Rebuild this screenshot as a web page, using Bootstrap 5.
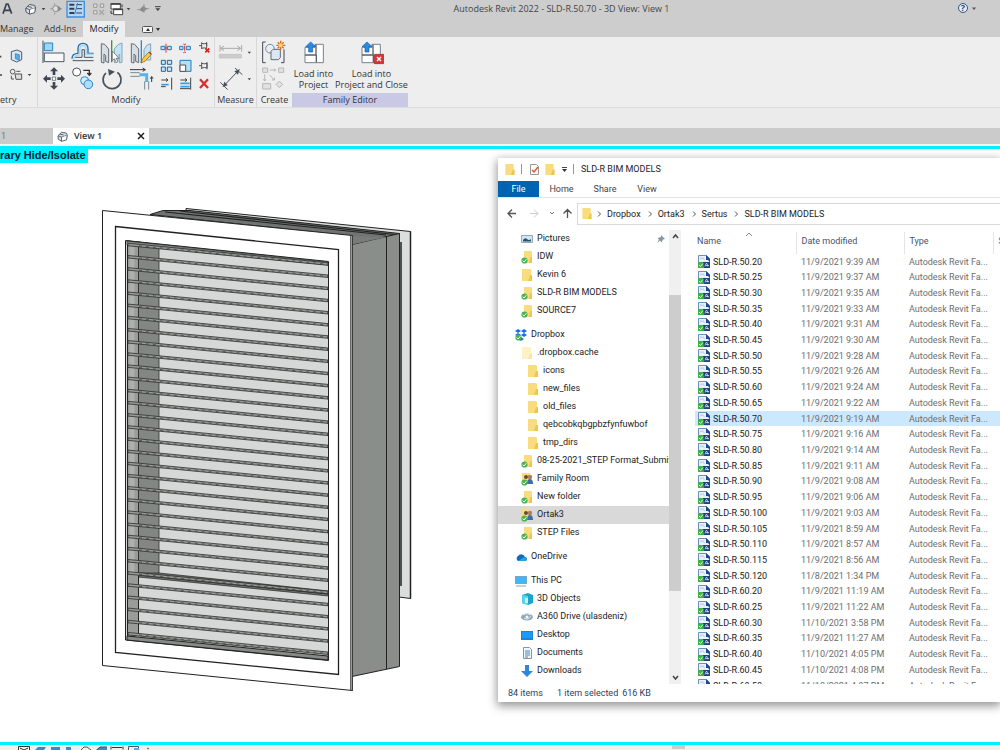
<!DOCTYPE html>
<html lang="en">
<head>
<meta charset="utf-8">
<meta name="viewport" content="width=device-width, initial-scale=1">
<title>Autodesk Revit 2022 - SLD-R.50.70 - 3D View: View 1</title>
<link href="https://cdn.jsdelivr.net/npm/bootstrap@5.3.0/dist/css/bootstrap.min.css" rel="stylesheet">
<style>
body{font-family:Roboto,"Open Sans",sans-serif;font-size:9px;line-height:12px;color:#333;background:#fff}
svg{display:block;flex:none}
button{border:0;background:none;padding:0;color:inherit;font:inherit}
a{color:inherit;text-decoration:none}
.titlebar{height:18px;background:#cdcdcd}
.tabbar{height:19px;background:#cdcdcd}
.tabbar a{height:16px;line-height:15px}
.titlebar,.tabbar,.ribbon{font-family:"Open Sans",sans-serif}
.tab-manage{width:37px}
.tab-addins{width:46px;text-align:center}
.tab-modify{width:42px;text-align:center;background:#eee;color:#222}
.app-title{font-size:9px;color:#444;padding-left:123px}
.ribbon{height:71px;background:#eee;border-bottom:1px solid #dcdcdc}
.panel{border-right:1px solid #d8d8d8;padding-top:2px}
.panel-name{height:14px;line-height:14px;text-align:center}
.tools{height:54px}
.tool-grid{display:grid;grid-template-columns:repeat(4,29px);grid-template-rows:26px 26px;width:119px;padding-left:2px}
.mini-grid{display:grid;grid-template-columns:repeat(3,19px);grid-template-rows:repeat(3,18px)}
.p-geom{width:38px}.p-measure{width:42px}.p-create{width:35px}
.p-family{width:116px}
.p-family .panel-name{background:#c9c9e6}
.load-a{width:43px}.load-b{width:73px}
.load-a,.load-b{line-height:11px}
.optbar{height:20px;background:#ebebeb}
.viewtabs{height:18px;background:#cbcbcb;border-bottom:2px solid #f4f4f4}
.tab-prev{width:53px;padding-left:1px;color:#777}
.tab-cur{width:96px;gap:6px;background:#fff;font-weight:600;color:#333;font-family:"Open Sans",sans-serif}
.canvas{border-top:3px solid #00f0ff;border-bottom:3px solid #00f0ff;background:#fff;min-height:0}
.mode-label{width:88px;height:14px;background:#00f0ff;color:#023;font:bold 11px/12px "Liberation Sans",sans-serif;white-space:nowrap}
.model{left:90px;top:50px}
.viewbar{height:5px;background:#efefef}
.viewbar i{width:13px;height:4px;background:#ccc;margin-left:522px}
.explorer{left:498px;right:0;top:9px;bottom:40px;background:#fff;box-shadow:0 3px 9px 1px rgba(0,0,0,.42);color:#333}
.ex-title{height:24px;color:#222;padding-left:6px}
.ex-menu{height:17px;border-bottom:1px solid #e4e4e4}
.ex-menu a{line-height:17px;text-align:center;color:#444}
.ex-menu .file-tab{background:#0063b1;color:#fff;width:41px}
.ex-menu .m-home{width:45px}.ex-menu .m-share{width:42px}.ex-menu .m-view{width:42px}
.ex-addr{height:33px;padding-top:5px}
.crumbs{height:22px;border:1px solid #dadada;border-right:0}
.crumbs a{color:#222}
.ex-body{min-height:0}
.side{width:171px}
.side a{height:18px;line-height:17px;color:#222;white-space:nowrap;overflow:hidden}
.side .lv0{padding-left:17px;margin-top:6px}
.side .lv1{padding-left:23px}
.side .lv2{padding-left:29px}
.side .on{background:#d9d9d9}
.sbar{width:12px;background:#f0f0f0}
.sbar .thumb{height:296px;background:#cdcdcd;margin-top:52px}
.list-area{margin-left:14px;padding-top:2px}
.files{height:462px;table-layout:fixed;width:100%;border-collapse:collapse;line-height:12px;white-space:nowrap}
.files th{font-weight:400;color:#44546f;height:22px;padding:0 0 3px 5px;border-left:1px solid #e4e4e4}
.files th:first-child{border:0;padding-left:2px}
.files td{padding:0 0 0 5px;color:#6d6d6d;overflow:hidden}
.files td:first-child{padding-left:3px;color:#222}
.files td svg{margin-right:3px}
.files .on td{background:#cce8ff}
.c-name{width:101px}.c-date{width:108px}.c-type{width:89px}
.ex-status{height:19px;color:#2b4261}
.ex-status .cnt{width:49px;margin-left:10px}
</style>
</head>
<body class="vh-100 overflow-hidden d-flex flex-column">
<svg width="0" height="0" class="position-absolute" aria-hidden="true">
<defs>
<symbol id="folder" viewBox="0 0 12 14"><path d="M1 1h8l1 1v11H1z" fill="#f9dc7e"/><path d="M9 7h2v6H7z" fill="#eec64f"/></symbol>
<symbol id="folder-pale" viewBox="0 0 12 14"><path d="M1 1h8l1 1v11H1z" fill="#fdf1c8"/><path d="M9 7h2v6H7z" fill="#f9e7a8"/></symbol>
<symbol id="tick" viewBox="0 0 7 7"><circle cx="3.5" cy="3.5" r="3.1" fill="#4bb450"/><path d="M1.700 3.600l1.400 1.400 2.300-2.800" fill="none" stroke="#fff"/></symbol>
<symbol id="folder-ok" viewBox="0 0 12 14"><path d="M3 1h7l1 1v11H3z" fill="#f9dc7e"/><path d="M9 7h2v6H8z" fill="#eec64f"/><use href="#tick" y="7" width="7" height="7"/></symbol>
<symbol id="people" viewBox="0 0 12 14"><path d="M1 1h8v11H1z" fill="#f9dc7e"/><circle cx="5" cy="5" r="2" fill="#6b4a35"/><circle cx="9" cy="5" r="2.200" fill="#a98266"/><path d="M6 12q0-5 3-5t3 5z" fill="#3d6ea5"/><use href="#tick" y="7" width="7" height="7"/></symbol>
<symbol id="dropbox" viewBox="0 0 12 14"><path d="M3 1l3 2-3 2-3-2zm6 0l3 2-3 2-3-2zM3 5l3 2-3 2-3-2zm6 0l3 2-3 2-3-2zM6 9l3 2-3 2-3-2z" fill="#1471e8"/><use href="#tick" y="6" width="7" height="7"/></symbol>
<symbol id="pics" viewBox="0 0 12 14"><path d="M.5 3.500h11v7H.5z" fill="#cfe6f7" stroke="#9aa8b3"/><path d="M2 8q2-3 4-1t4 0v2.500H2z" fill="#26546f"/></symbol>
<symbol id="cloud" viewBox="0 0 12 14"><path d="M3 11a3 3 0 0 1 0-5 4 4 0 0 1 7 1 2 2 0 0 1 0 4z" fill="#0f6cbd"/><path d="M3 11l6-4 2 1a2 2 0 0 1-1 3z" fill="#2aa0e8"/></symbol>
<symbol id="pc" viewBox="0 0 12 14"><path d="M0 2h12v8H0z" fill="#6fa9cc"/><path d="M1 3h10v6H1z" fill="#42b6f5"/><path d="M1 12h10" stroke="#8aa"/></symbol>
<symbol id="cube" viewBox="0 0 12 14"><path d="M1 3l6-2 5 2v8l-5 2-6-2z" fill="#1ba6c9"/><path d="M1 3l6 1v9l-6-2z" fill="#56d5ea"/><path d="M4 6h3v5H4z" fill="#c5f4fa"/></symbol>
<symbol id="drive" viewBox="0 0 12 14"><ellipse cx="6" cy="7" rx="6" ry="3.500" fill="#8ba7b8"/><path d="M2 5q4-3 8 0M3 8q4 3 7-2" stroke="#dfeaf0" fill="none"/><circle cx="6" cy="7" r="1.500" fill="#fff"/></symbol>
<symbol id="desk" viewBox="0 0 12 14"><path d="M0 3h12v9H0z" fill="#1a83dd"/><path d="M1 4h10v6H1z" fill="#1c9bf6"/></symbol>
<symbol id="doc" viewBox="0 0 12 14"><path d="M2.500 1.500h6l2 2v9h-8z" fill="#f3f7fa" stroke="#8595a3"/><path d="M4 5h5M4 7h5M4 9h5M4 11h3" stroke="#3b8cc5"/></symbol>
<symbol id="down" viewBox="0 0 12 14"><path d="M4 1h4v6h4l-6 6-6-6h4z" fill="#2d86dc"/></symbol>
<symbol id="rfa" viewBox="0 0 12 13"><path d="M.5.5h8l3 3v9H.5z" fill="#e9f1fa" stroke="#6b8fb8"/><path d="M8 0l4 4v3l-2-2H8z" fill="#1a4a94"/><path d="M2 4q2-2 5 1M2 3h4" stroke="#c3d2e2" fill="none"/><path d="M5 7h7v6H5z" fill="#1d4379"/><path d="M7 11.500l1-3h1l1 3m-2-1h3" stroke="#cfe0f2" stroke-width=".8" fill="none"/><path d="M0 7h5l1 6H0z" fill="#3eb24a"/><path d="M1 10l1.500 1.500L5 8.500" stroke="#dff5df" fill="none"/></symbol>
<symbol id="house" viewBox="0 0 36 36"><path d="M3 16L15 4l16 3 3 8-3 14-16 5-11-7z" fill="#d9dde2" stroke="#4f5a66" stroke-width="3"/><path d="M4 16l11 4 16-5M15 20v13M9 10l13 3" fill="none" stroke="#4f5a66" stroke-width="3"/><path d="M17 20l12-4v11l-12 4z" fill="#fff"/></symbol>
</defs>
</svg>

<header class="titlebar d-flex align-items-center position-relative">
<button aria-label="Application menu"><svg width="20" height="18" viewBox="0 0 60 54"><path d="M9 41L19 12h5l11 29m-22-10h17" fill="none" stroke="#39424d" stroke-width="5"/></svg></button>
<button aria-label="3D view"><svg width="20" height="18" viewBox="60 0 60 54"><use href="#house" x="74" y="9" width="35" height="36"/></svg></button>
<button aria-label="More views"><svg width="8" height="18" viewBox="120 0 24 54"><path d="M125 24h11l-5.500 7z" fill="#444"/></svg></button>
<button aria-label="Section"><svg width="16" height="18" viewBox="144 0 48 54"><path d="M164 10v6m0 22v6M151 26h6" stroke="#999" stroke-width="3"/><circle cx="167" cy="26" r="9" fill="#ddd" stroke="#8a8a8a" stroke-width="3"/><path d="M173 17l13 9-13 9z" fill="#888"/></svg></button>
<button aria-label="Thin lines"><svg width="23" height="18" viewBox="192 0 69 54"><path d="M201 4h52v47h-52z" fill="#b4d6f7" stroke="#3d8fe0" stroke-width="4"/><path d="M208 14h15m-15 12h15m-15 13h15" stroke="#333f4d" stroke-width="6"/><path d="M229 14h17m-17 12h17m-17 13h17" stroke="#333f4d" stroke-width="3"/><path d="M233 9l-9 34" stroke="#2f82d6" stroke-width="3"/></svg></button>
<button aria-label="Close hidden windows"><svg width="21" height="18" viewBox="261 0 63 54"><path d="M281 12h10v10h-10zm20 0h10v10h-10zm-20 20h10v10h-10z" fill="#ddd" stroke="#999" stroke-width="3"/><path d="M298 30l14 14m0-14l-14 14" stroke="#aaa" stroke-width="5"/></svg></button>
<button aria-label="Switch windows"><svg width="16" height="18" viewBox="324 0 48 54"><path d="M333 11h28v16h-28z" fill="#fff" stroke="#444" stroke-width="3"/><path d="M332 12h30" stroke="#444" stroke-width="5"/><path d="M341 28h27v16h-27z" fill="#fff" stroke="#444" stroke-width="3"/><path d="M340 28h29" stroke="#444" stroke-width="5"/><path d="M333 32v8h5M366 13v9" stroke="#333" stroke-width="3" fill="none"/></svg></button>
<button aria-label="Window list"><svg width="10" height="18" viewBox="372 0 30 54"><path d="M380 24h11l-5.500 7z" fill="#444"/></svg></button>
<button aria-label="Sync"><svg width="18" height="18" viewBox="402 0 54 54"><path d="M411 29h14m10-3h12" stroke="#999" stroke-width="3"/><path d="M418 29l12-12 11 9-11 11z" fill="#888"/><path d="M432 12v26" stroke="#999" stroke-width="3"/></svg></button>
<button aria-label="Customize toolbar"><svg width="11" height="18" viewBox="456 0 33 54"><path d="M465 20h17" stroke="#444" stroke-width="3"/><path d="M466 25h15l-7.500 8z" fill="#444"/></svg></button>
<span class="app-title position-absolute start-0 end-0 text-center">Autodesk Revit 2022 - SLD-R.50.70 - 3D View: View 1</span>
<button class="ms-auto me-4" aria-label="Help"><svg width="20" height="18" viewBox="0 0 20 18"><circle cx="7" cy="8" r="4.500" fill="#e8eef5" stroke="#33547c"/><text x="7" y="11" text-anchor="middle" font-size="9" font-weight="700" fill="#234a7c">?</text><path d="M16 7.500h4l-2 2.500z" fill="#555"/></svg></button>
</header>

<nav class="tabbar d-flex align-items-end" aria-label="Ribbon tabs">
<a href="#" class="tab-manage">Manage</a><a href="#" class="tab-addins">Add-Ins</a><a href="#" class="tab-modify">Modify</a>
<button class="ms-3" aria-label="Ribbon display"><svg width="22" height="15" viewBox="0 0 22 15"><rect x="1.500" y="4.500" width="10" height="6" rx="1" fill="#f5f5f5" stroke="#555"/><path d="M5 9h4L7 6z" fill="#333"/><path d="M15 6h4l-2 3z" fill="#333"/></svg></button>
</nav>

<section class="ribbon d-flex" aria-label="Ribbon">
<div class="panel p-geom">
<div class="tools"><svg width="37" height="54" viewBox="0 117 111 162"><path d="M0 170h4M0 225h6" stroke="#444" stroke-width="5"/><path d="M34 155l17-5 14 6v23l-15 7-16-7z" fill="#dbe9f5" stroke="#4c5d70" stroke-width="3"/><path d="M46 161l12 3v17l-12-5z" fill="#58aeea" stroke="#2773b0" stroke-width="2"/><circle cx="38" cy="215" r="7" fill="none" stroke="#555" stroke-width="3"/><path d="M45 222h20v16H48zM49 214h12M34 227v10h8" fill="#ddd" stroke="#555" stroke-width="3"/><path d="M83 222h11l-5.500 6z" fill="#444"/></svg></div>
<div class="panel-name text-start">etry</div>
</div>
<div class="panel">
<div class="tools d-flex">
<div class="tool-grid">
<button aria-label="Align"><svg width="29" height="26" viewBox="120 117 87 78"><path d="M129 122v67" stroke="#3f4b58" stroke-width="3"/><path d="M133 129h25v23h-25z" fill="#9dd6f6" stroke="#2b83bb" stroke-width="3"/><path d="M133 159h59v26h-59z" fill="#f7f7f7" stroke="#4c5966" stroke-width="3"/></svg></button>
<button aria-label="Offset"><svg width="29" height="26" viewBox="207 117 87 78"><path d="M216 176q0-16 18-16v-14q0-16 15-16t15 16v14h17" fill="none" stroke="#276ca5" stroke-width="4"/><path d="M221 179q0-14 17-14l2-19q0-10 9-10t9 10v17h23" fill="none" stroke="#a9daf5" stroke-width="5"/><path d="M218 182h63M226 172h20v-23h7v23h27" fill="none" stroke="#465664" stroke-width="3"/></svg></button>
<button aria-label="Mirror by axis"><svg width="29" height="26" viewBox="294 117 87 78"><path d="M304 131l10 2 12 14v41l-9-4v-17l-5-5v27l-8-2z" fill="#d9dee4" stroke="#626d79" stroke-width="3"/><path d="M366 129l-12 5-11 13v41l11-4v-17l5-5v27l7-2z" fill="#bfe5f7" stroke="#8aa5b5" stroke-width="3"/><path d="M335 121v66" stroke="#369b35" stroke-width="4"/><path d="M337 153v29l6-6 6 12 5-3-6-10h9z" fill="#fff" stroke="#555" stroke-width="2"/></svg></button>
<button aria-label="Mirror by drawing"><svg width="29" height="26" viewBox="381 117 87 78"><path d="M394 131l10 2 12 14v41l-9-4v-17l-5-5v27l-8-2z" fill="#d9dee4" stroke="#626d79" stroke-width="3"/><path d="M452 131l-12 5-8 13v31h20z" fill="#bfe5f7" stroke="#8aa5b5" stroke-width="3"/><path d="M424 121v68" stroke="#2d89cf" stroke-width="4"/><path d="M423 189l5-13 19-20 7 7-19 21z" fill="#ffcb3f" stroke="#80591c" stroke-width="2"/><path d="M447 156l7 7" stroke="#c42b24" stroke-width="4"/></svg></button>
<button aria-label="Move"><svg width="29" height="26" viewBox="120 195 87 78"><path d="M162 202l12 12h-8v11h-8v-11h-8zm0 67l12-12h-8v-11h-8v11h-8zM129 236l12-12v8h11v8h-11v8zm66 0l-12-12v8h-11v8h11v8z" fill="#3e4854"/><path d="M157 231h10v10h-10z" fill="#fff" stroke="#3e4854" stroke-width="2"/></svg></button>
<button aria-label="Copy"><svg width="29" height="26" viewBox="207 195 87 78"><circle cx="230" cy="216" r="12" fill="#fff" stroke="#48525d" stroke-width="3"/><path d="M250 211h18v13m-6-5l6 7 6-7" fill="none" stroke="#333" stroke-width="4"/><circle cx="254" cy="242" r="12" fill="#ccecfc" stroke="#2a86ca" stroke-width="3"/><circle cx="265" cy="253" r="13" fill="#afdcf6" stroke="#2a86ca" stroke-width="3"/></svg></button>
<button aria-label="Rotate"><svg width="29" height="26" viewBox="294 195 87 78"><path d="M318 219a27 27 0 1 0 34-2" fill="none" stroke="#48525d" stroke-width="5"/><path d="M324 207l21 8-18 12z" fill="#48525d"/></svg></button>
<button aria-label="Trim"><svg width="29" height="26" viewBox="381 195 87 78"><path d="M390 209h46m-8-5l8 5-8 5M455 246v-16m-4 6l4-6 4 6" fill="none" stroke="#333" stroke-width="3"/><path d="M391 218h28M391 229h28M434 244v25M446 244v25" stroke="#7b8791" stroke-width="3"/><path d="M418 224h22v22" fill="none" stroke="#56b4ed" stroke-width="9"/></svg></button>
</div>
<div class="mini-grid">
<button aria-label="Split"><svg width="19" height="18" viewBox="471 117 57 54"><path d="M483 139h12v10h-12zm19 0h12v10h-12z" fill="#b9dff5" stroke="#2a7ab5" stroke-width="3"/><path d="M498 131v27M494 144h9" stroke="#d33" stroke-width="3"/></svg></button>
<button aria-label="Split with gap"><svg width="19" height="18" viewBox="528 117 57 54"><path d="M539 139h10v10h-10zm20 0h12v10h-12z" fill="#b9dff5" stroke="#2a7ab5" stroke-width="3"/><path d="M550 132q5 3 8 0m-8 26q5-4 8 0M554 137v15" stroke="#d33" stroke-width="3" fill="none"/></svg></button>
<button aria-label="Unpin"><svg width="19" height="18" viewBox="585 117 57 54"><path d="M597 137h8m0-10v20m0-17q8 3 15 0v15q-8-3-15 0m15-19v12" fill="none" stroke="#555" stroke-width="3"/><path d="M616 145l12 12m0-12l-12 12" stroke="#d22" stroke-width="5"/></svg></button>
<button aria-label="Array"><svg width="19" height="18" viewBox="471 171 57 54"><path d="M484 181h12v12h-12zm18 0h13v12h-13zm-18 20h12v13h-12zm18 0h13v13h-13z" fill="#c4e7fa" stroke="#27648f" stroke-width="3"/></svg></button>
<button aria-label="Scale"><svg width="19" height="18" viewBox="528 171 57 54"><path d="M540 181h33v33h-33z" fill="#b5dff5" stroke="#2a7ab5" stroke-width="3"/><path d="M540 195h17v19h-17z" fill="#fff" stroke="#555" stroke-width="3"/></svg></button>
<button aria-label="Pin"><svg width="19" height="18" viewBox="585 171 57 54"><path d="M597 197h8m0-10v20m0-17q8 3 16 0v14q-8-3-16 0m16-18v22" fill="none" stroke="#555" stroke-width="3"/></svg></button>
<button aria-label="Extend"><svg width="19" height="18" viewBox="471 225 57 54"><path d="M484 240h20m-6-5l6 5-6 5M515 233v36M483 260h14" stroke="#444" stroke-width="3" fill="none"/><path d="M484 254h22" stroke="#3c9fe0" stroke-width="5"/></svg></button>
<button aria-label="Extend multiple"><svg width="19" height="18" viewBox="528 225 57 54"><path d="M541 240h20m-6-5l6 5-6 5M572 233v36M540 266h30" stroke="#444" stroke-width="3" fill="none"/><path d="M541 250h28m-28 10h28" stroke="#3c9fe0" stroke-width="5"/></svg></button>
<button aria-label="Delete"><svg width="19" height="18" viewBox="585 225 57 54"><path d="M600 238l24 26m0-26l-24 26" stroke="#d5302b" stroke-width="7"/></svg></button>
</div>
</div>
<div class="panel-name">Modify</div>
</div>
<div class="panel p-measure">
<div class="tools"><svg width="41" height="54" viewBox="47 117 123 162"><path d="M64 145h60m-50-7l-10 7 10 7m40-14l10 7-10 7M62 135v20m65-20v20" fill="none" stroke="#aaa" stroke-width="3"/><path d="M60 163h66v11H60z" fill="#ccc" stroke="#bbb" stroke-width="2"/><path d="M145 155h10l-5 6zM145 235h10l-5 6z" fill="#444"/><path d="M72 259l48-50M63 247l22 22m22-65l22 20" fill="none" stroke="#46515d" stroke-width="3"/><path d="M70 261l5-16 10 11zm51-53l-16 6 11 10z" fill="#46515d"/></svg></div>
<div class="panel-name">Measure</div>
</div>
<div class="panel p-create border-0">
<div class="tools"><svg width="34" height="54" viewBox="170 117 102 162"><path d="M196 126h-9v62h9m46 0h9v-40" fill="none" stroke="#3f4954" stroke-width="3"/><circle cx="209" cy="146" r="13" fill="#e9eef3" stroke="#7e8894" stroke-width="3"/><path d="M212 154l6-6h22v25l-6 6h-22z" fill="#dbe8f2" stroke="#5f6d7b" stroke-width="3"/><path d="M241 122v27m-13-13h27m-23-9l18 18m0-18l-18 18" stroke="#e9660e" stroke-width="4"/><circle cx="241" cy="136" r="6" fill="#ffdc62"/><path d="M187 204h15v13h-15zm48 0h15v13h-15zm-48 47h24v16h-24zm50-8l10 10-10 10-10-10zM208 210h18m-5-4l5 4-5 4M193 223v20m-4-5l4 5 4-5M208 225l14 15m0-7v7h-7" fill="#e2e2e2" stroke="#b7b7b7" stroke-width="3"/></svg></div>
<div class="panel-name">Create</div>
</div>
<div class="p-family panel border-0">
<div class="tools d-flex">
<button class="load-a d-flex flex-column align-items-center"><svg width="22" height="29" viewBox="304 117 66 87"><path d="M310 142h30v-9h25v55h-55z" fill="#fff" stroke="#76818c" stroke-width="3"/><path d="M310 165h33v-31M344 165v22" fill="none" stroke="#55616d" stroke-width="4"/><path d="M327 126l15 14h-9v16h-12v-16h-9z" fill="#278be8" stroke="#145fa8" stroke-width="2"/></svg>Load into<br>Project</button>
<button class="load-b d-flex flex-column align-items-center"><svg width="24" height="29" viewBox="474 117 72 87"><path d="M480 142h30v-9h25v55h-55z" fill="#fff" stroke="#76818c" stroke-width="3"/><path d="M480 165h33v-31M514 165v22" fill="none" stroke="#55616d" stroke-width="4"/><path d="M495 126l15 14h-9v16h-12v-16h-9z" fill="#278be8" stroke="#145fa8" stroke-width="2"/><path d="M517 163h28v28h-28z" fill="#d83434" stroke="#972020" stroke-width="2"/><path d="M525 171l12 12m0-12l-12 12" stroke="#fff" stroke-width="4"/></svg>Load into<br>Project and Close</button>
</div>
<div class="panel-name">Family Editor</div>
</div>
</section>
<div class="optbar"></div>

<nav class="viewtabs d-flex align-items-stretch" aria-label="Open views">
<a href="#" class="tab-prev d-flex align-items-center">1</a>
<a href="#" class="tab-cur d-flex align-items-center ps-1 pe-1"><svg width="11" height="11"><use href="#house" width="11" height="11"/></svg><span class="flex-grow-1">View 1</span><svg width="8" height="8" viewBox="0 0 8 8"><path d="M1 1l6 6m0-6L1 7" stroke="#222" stroke-width="1.500"/></svg></a>
</nav>

<main class="canvas flex-grow-1 position-relative overflow-hidden">
<div class="mode-label">rary Hide/Isolate</div>
<svg class="model position-absolute" width="330" height="500" viewBox="90 199 330 500" role="img" aria-label="Louver model">
<g stroke="#222" stroke-width="1">
<path d="M186 211V208.500L410.500 231.500V598.500L399 597V240z" fill="#dcdedd"/>
<path d="M410.500 231.500V598.500" stroke-width="1.500"/>
<path d="M150 214.500L163 210.500 190 210.500 399.500 233.500V237L352 244.500V236z" fill="#6f7371"/>
<path d="M165 212L386 235M180 211L399 235" stroke-width="1.200"/>
<path d="M352 244.500L399.500 233.500V666.500L352 676.500z" fill="#8a8e8b"/>
<path d="M352 236L386.500 237 352 244.500z" fill="#777b79" stroke="none"/>
<path d="M386.500 237V669"/>
<path d="M401 242V586" stroke-width="1.500"/>
<path d="M102.500 210.500L352.500 235.500V690.500L102.500 665.500z" fill="#fff"/>
<path d="M350.500 235.500H352.500V690.500L350.500 690z" fill="#999" stroke-width=".6"/>
<path d="M115.500 226.500L338.500 249.500V674.500L115.500 652.500z" fill="#fff" stroke-width="1.300"/>
<path d="M125.500 240.500L328.500 261.500V660.500L125.500 640z" fill="#d5d8d6"/>
<path d="M127.500 241V640L138.500 634V242z" fill="#989d99"/>
<path d="M132 242V575" stroke="#adb1ae" stroke-width="5"/>
<path d="M138.500 242L159 245V573L138.500 577z" fill="#828783" stroke-width=".7"/>
<path d="M138.500 573L159 573 328.500 591V596L138.500 577z" fill="#6d716e" stroke-width=".7"/>
<path d="M138.500 575L328.500 594"/>
<path d="M127 241L328 262V265L127 245z" fill="#868b88" stroke-width=".7"/>
<path d="M127 636L328 656V660L127 640z" fill="#868b88"/>
</g>
<g id="blades" fill="#979c99" stroke="#2c2e2c" stroke-width=".8"></g>
</svg>

<section class="explorer position-absolute d-flex flex-column" aria-label="File Explorer">
<div class="ex-title d-flex align-items-center">
<svg width="12" height="13"><use href="#folder"/></svg><svg width="12" height="13"><path d="M5.500 1v10" stroke="#999"/></svg>
<svg width="12" height="13" viewBox="0 0 12 13"><path d="M2.500 1.500h6l2 2v8h-8z" fill="#fafafa" stroke="#999"/><path d="M4 7l2 2 4-5" fill="none" stroke="#e0592a" stroke-width="1.500"/></svg>
<svg width="12" height="13" class="ms-1"><use href="#folder"/></svg>
<svg width="25" height="13"><path d="M6 4.500h5" stroke="#444"/><path d="M6 6h5L8.500 9z" fill="#333"/><path d="M17.500 1v10" stroke="#999"/></svg><span>SLD-R BIM MODELS</span>
</div>
<nav class="ex-menu d-flex" aria-label="Explorer menu"><a href="#" class="file-tab">File</a><a href="#" class="m-home">Home</a><a href="#" class="m-share">Share</a><a href="#" class="m-view">View</a></nav>
<div class="ex-addr d-flex">
<svg width="79" height="21" viewBox="0 0 79 21"><path d="M18 10.500H10m4-4l-4 4 4 4M69.500 15V6.500m-4 4l4-4 4 4" fill="none" stroke="#555" stroke-width="1.300"/><path d="M32 10.500h8m-4-4l4 4-4 4" fill="none" stroke="#ccc"/><path d="M52 9l2 2 2-2" fill="none" stroke="#777"/></svg>
<div class="crumbs flex-grow-1 d-flex align-items-center"><svg width="12" height="13" class="ms-1"><use href="#folder" x="-1"/></svg><span class="d-flex align-items-center" id="crumbs"></span></div>
</div>
<div class="ex-body d-flex flex-grow-1 overflow-hidden">
<nav class="side" id="tree" aria-label="Folders"></nav>
<div class="sbar d-flex flex-column"><svg width="12" height="13"><path d="M4 8l2.500-3L9 8" fill="none" stroke="#444" stroke-width="1.500"/></svg><div class="thumb"></div><svg width="12" height="13" class="mt-auto"><path d="M4 5l2.500 3L9 5" fill="none" stroke="#444" stroke-width="1.500"/></svg></div>
<div class="list-area flex-grow-1 overflow-hidden">
<table class="files"><colgroup><col class="c-name"><col class="c-date"><col class="c-type"><col></colgroup>
<thead><tr><th class="position-relative">Name<svg class="position-absolute top-0 start-50" width="8" height="5"><path d="M1 4l3-3 3 3" fill="none" stroke="#888"/></svg></th><th>Date modified</th><th>Type</th><th>S</th></tr></thead>
<tbody id="rows"></tbody></table>
</div>
</div>
<footer class="ex-status d-flex align-items-center"><span class="cnt">84 items</span><span class="me-1">1 item selected</span><span>616 KB</span></footer>
</section>
</main>
<footer class="viewbar d-flex flex-shrink-0"><svg width="150" height="5" viewBox="0 0 150 5"><path d="M18.500 5V1.500h11V5M20 3l4 2 4-2M111 1.500v3m12-3v3m-11-2h10" fill="none" stroke="#333"/><path d="M35 5l3-3h8l-2 3zm16 0V2h9v3zm15 0V2h5v3zm30 0l3-3h8v3z" fill="#3f87c2"/><path d="M81 5l3-3h3l4 3M97 5l3-3h7M128.500 5V1.500h10V5M147 3l2 1" fill="none" stroke="#555"/><path d="M134 3h5v2h-5z" fill="#59a9e6"/></svg><i></i></footer>

<script>
// Louver blades: evenly spaced slats seen in slight perspective
const blades = [];
for (let k = -1; k <= 31; k++) {
  const y = Math.round((256.5 + k * 12.16) * 10) / 10;
  blades.push(`<path d="M128 ${y - 1}L139 ${y}L328 ${y + 18.5}V${y + 21}L139 ${y + 2.5}L128 ${y + 1.500}z"/><path d="M139 ${y + 1.500}L328 ${y + 20}" stroke-dasharray="3 4" stroke-width=".6"/>`);
}
document.getElementById('blades').innerHTML = blades.join('');

document.getElementById('crumbs').innerHTML = ['Dropbox', 'Ortak3', 'Sertus', 'SLD-R BIM MODELS']
  .map(t => `<svg width="13" height="8"><path d="M4 1.500l2.500 2.500L4 6.500" fill="none" stroke="#555"/></svg><a href="#" class="me-1">${t}</a>`).join('');

const tree = [[1,'pics','Pictures'],[1,'folder-ok','IDW'],[1,'folder','Kevin 6'],[1,'folder-ok','SLD-R BIM MODELS'],[1,'folder-ok','SOURCE7'],
[0,'dropbox','Dropbox'],[1,'folder-pale','.dropbox.cache'],[2,'folder','icons'],[2,'folder','new_files'],[2,'folder','old_files'],
[2,'folder','qebcobkqbgpbzfynfuwbof'],[2,'folder','tmp_dirs'],[1,'folder-ok','08-25-2021_STEP Format_Submitt'],[1,'people','Family Room'],
[1,'folder-ok','New folder'],[1,'people','Ortak3'],[1,'folder-ok','STEP Files'],[0,'cloud','OneDrive'],[0,'pc','This PC'],
[1,'cube','3D Objects'],[1,'drive','A360 Drive (ulasdeniz)'],[1,'desk','Desktop'],[1,'doc','Documents'],[1,'down','Downloads']];
const pin = '<svg width="8" height="8" viewBox="0 0 8 8" class="ms-auto me-1"><path d="M4 0l4 4-2 .5-1.500 3L3 5.500 0 8l2-3.500-1.500-1.500L4 2z" fill="#8796a5"/></svg>';
document.getElementById('tree').innerHTML = tree.map(([lv, icon, t]) =>
  `<a href="#" class="d-flex align-items-center lv${lv}${t === 'Ortak3' ? ' on' : ''}"><svg width="12" height="14" class="me-1"><use href="#${icon}"/></svg>${t}${icon === 'pics' ? pin : ''}</a>`).join('')
  + '<a href="#" class="lv1" aria-label="Music"><svg width="12" height="8"><path d="M6.500 2v5" stroke="#1c9bf6" stroke-width="2"/></svg></a>';

const files = [['50.20','9/2021 9:39 AM'],['50.25','9/2021 9:37 AM'],['50.30','9/2021 9:35 AM'],['50.35','9/2021 9:33 AM'],['50.40','9/2021 9:31 AM'],
['50.45','9/2021 9:30 AM'],['50.50','9/2021 9:28 AM'],['50.55','9/2021 9:26 AM'],['50.60','9/2021 9:24 AM'],['50.65','9/2021 9:22 AM'],
['50.70','9/2021 9:19 AM'],['50.75','9/2021 9:16 AM'],['50.80','9/2021 9:14 AM'],['50.85','9/2021 9:11 AM'],['50.90','9/2021 9:08 AM'],
['50.95','9/2021 9:06 AM'],['50.100','9/2021 9:03 AM'],['50.105','9/2021 8:59 AM'],['50.110','9/2021 8:57 AM'],['50.115','9/2021 8:56 AM'],
['50.120','8/2021 1:34 PM'],['60.20','9/2021 11:19 AM'],['60.25','9/2021 11:22 AM'],['60.30','10/2021 3:58 PM'],['60.35','9/2021 11:27 AM'],
['60.40','10/2021 4:05 PM'],['60.45','10/2021 4:08 PM'],['60.50','10/2021 4:07 PM']];
document.getElementById('rows').innerHTML = files.map(([n, d]) =>
  `<tr${n === '50.70' ? ' class="on"' : ''}><td><span class="d-flex align-items-center"><svg width="12" height="13"><use href="#rfa"/></svg>SLD-R.${n}</span></td><td>11/${d}</td><td>Autodesk Revit Fa...</td><td></td></tr>`).join('');
</script>
<script src="https://cdn.jsdelivr.net/npm/bootstrap@5.3.0/dist/js/bootstrap.bundle.min.js"></script>
</body>
</html>
